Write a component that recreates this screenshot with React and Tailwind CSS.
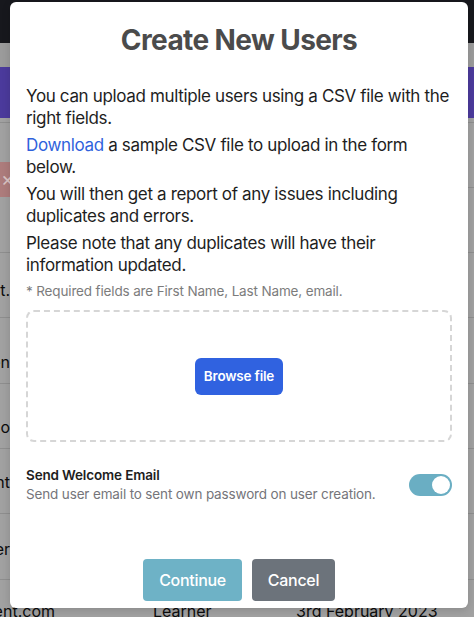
import React from "react";

export default function App() {
  const font = { fontFamily: "Inter, 'Noto Sans', sans-serif" };
  return (
    <div
      className="relative w-[474px] h-[617px] overflow-hidden bg-[#a1a1a1]"
      style={font}
    >
      {/* background page (dimmed) */}
      <div className="flex flex-col">
        <div className="h-[43px] bg-[#17181d]" />
        <div className="h-[24px] bg-[#9b9b9b]" />
        <div className="h-[51px] bg-[#4b3a9c]" />
        <div className="h-[5px] border-b border-[#8e8e8e]" />
        <div className="h-[65px] border-b border-[#8e8e8e] flex flex-col">
          <div className="mt-[39px] w-[10px] h-[35px] bg-[#ad7c7c] text-[#d9c4c4] text-[20px] leading-[35px] pl-[1px]">
            ×
          </div>
        </div>
        <div className="h-[65px] border-b border-[#8e8e8e]" />
        <div className="h-[65px] border-b border-[#8e8e8e] flex items-end pb-[17px]">
          <div className="w-[10px] overflow-hidden flex justify-end text-[16px] leading-[20px] text-[#0c0c0c] whitespace-nowrap">
            <span>Mgmt.</span>
          </div>
        </div>
        <div className="h-[66px] border-b border-[#8e8e8e] flex items-end pb-[11px]">
          <div className="w-[10px] overflow-hidden flex justify-end text-[16px] leading-[20px] text-[#0c0c0c] whitespace-nowrap">
            <span>Kitchen</span>
          </div>
        </div>
        <div className="h-[65px] border-b border-[#8e8e8e] flex items-end pb-[11px]">
          <div className="w-[10px] overflow-hidden flex justify-end text-[16px] leading-[20px] text-[#0c0c0c] whitespace-nowrap">
            <span>Demo</span>
          </div>
        </div>
        <div className="h-[65px] border-b border-[#8e8e8e] flex items-start pt-[23px]">
          <div className="w-[10px] overflow-hidden flex justify-end text-[16px] leading-[20px] text-[#0c0c0c] whitespace-nowrap">
            <span>Student</span>
          </div>
        </div>
        <div className="h-[66px] border-b border-[#8e8e8e] flex items-start pt-[25px]">
          <div className="w-[10px] overflow-hidden flex justify-end text-[16px] leading-[20px] text-[#0c0c0c] whitespace-nowrap">
            <span>Learner</span>
          </div>
        </div>
        <div className="flex items-start pt-[21px] text-[16px] leading-[20px] text-[#0c0c0c] whitespace-nowrap">
          <div className="w-[153px] flex justify-end overflow-hidden">
            <span className="mr-[98px]">user@content.com</span>
          </div>
          <div className="w-[143px]">Learner</div>
          <div>3rd February 2023</div>
        </div>
      </div>

      {/* modal */}
      <div className="absolute left-[10px] top-[2px] w-[458px] h-[606px] bg-white rounded-[6px] shadow-[0_2px_8px_rgba(0,0,0,0.15)] flex flex-col px-[16px]">
        <h1 className="pt-[20px] text-center text-[28px] leading-[36px] font-bold text-[#4b4b4b] tracking-[-0.6px]">
          Create New Users
        </h1>
        <div className="mt-[27px] flex flex-col gap-[5px] text-[17px] leading-[22px] tracking-[-0.35px] text-[#1e1e1e]">
          <p>You can upload multiple users using a CSV file with the right fields.</p>
          <p>
            <span className="text-[#2f62dc]">Download</span> a sample CSV file
            to upload in the form below.
          </p>
          <p>You will then get a report of any issues including duplicates and errors.</p>
          <p>Please note that any duplicates will have their information updated.</p>
        </div>
        <p className="mt-[5px] text-[13.5px] leading-[20px] tracking-[-0.15px] text-[#7c7c7c]">
          * Required fields are First Name, Last Name, email.
        </p>
        <div className="mt-[9px] h-[132px] rounded-[8px] border-2 border-dashed border-[#d6d6d6] flex items-center justify-center">
          <button className="w-[88px] h-[37px] rounded-[6px] bg-[#3062e0] text-white text-[13.5px] tracking-[-0.2px] font-semibold">
            Browse file
          </button>
        </div>
        <div className="mt-[24px] flex items-center justify-between">
          <div className="flex flex-col text-[13.5px] leading-[19px] tracking-[-0.15px]">
            <span className="font-semibold text-[#1e1e1e]">Send Welcome Email</span>
            <span className="text-[#75757a]">
              Send user email to sent own password on user creation.
            </span>
          </div>
          <div className="w-[43px] h-[22px] rounded-full bg-[#6aaec3] flex items-center justify-end pr-[2px]">
            <div className="w-[18px] h-[18px] rounded-full bg-white" />
          </div>
        </div>
        <div className="mt-[55px] flex justify-center gap-[10px]">
          <button className="w-[99px] h-[42px] rounded-[4px] bg-[#6eb2c6] text-white text-[16px] tracking-[-0.3px] font-medium">
            Continue
          </button>
          <button className="w-[83px] h-[42px] rounded-[4px] bg-[#6c737b] text-white text-[16px] tracking-[-0.3px] font-medium">
            Cancel
          </button>
        </div>
      </div>
    </div>
  );
}
